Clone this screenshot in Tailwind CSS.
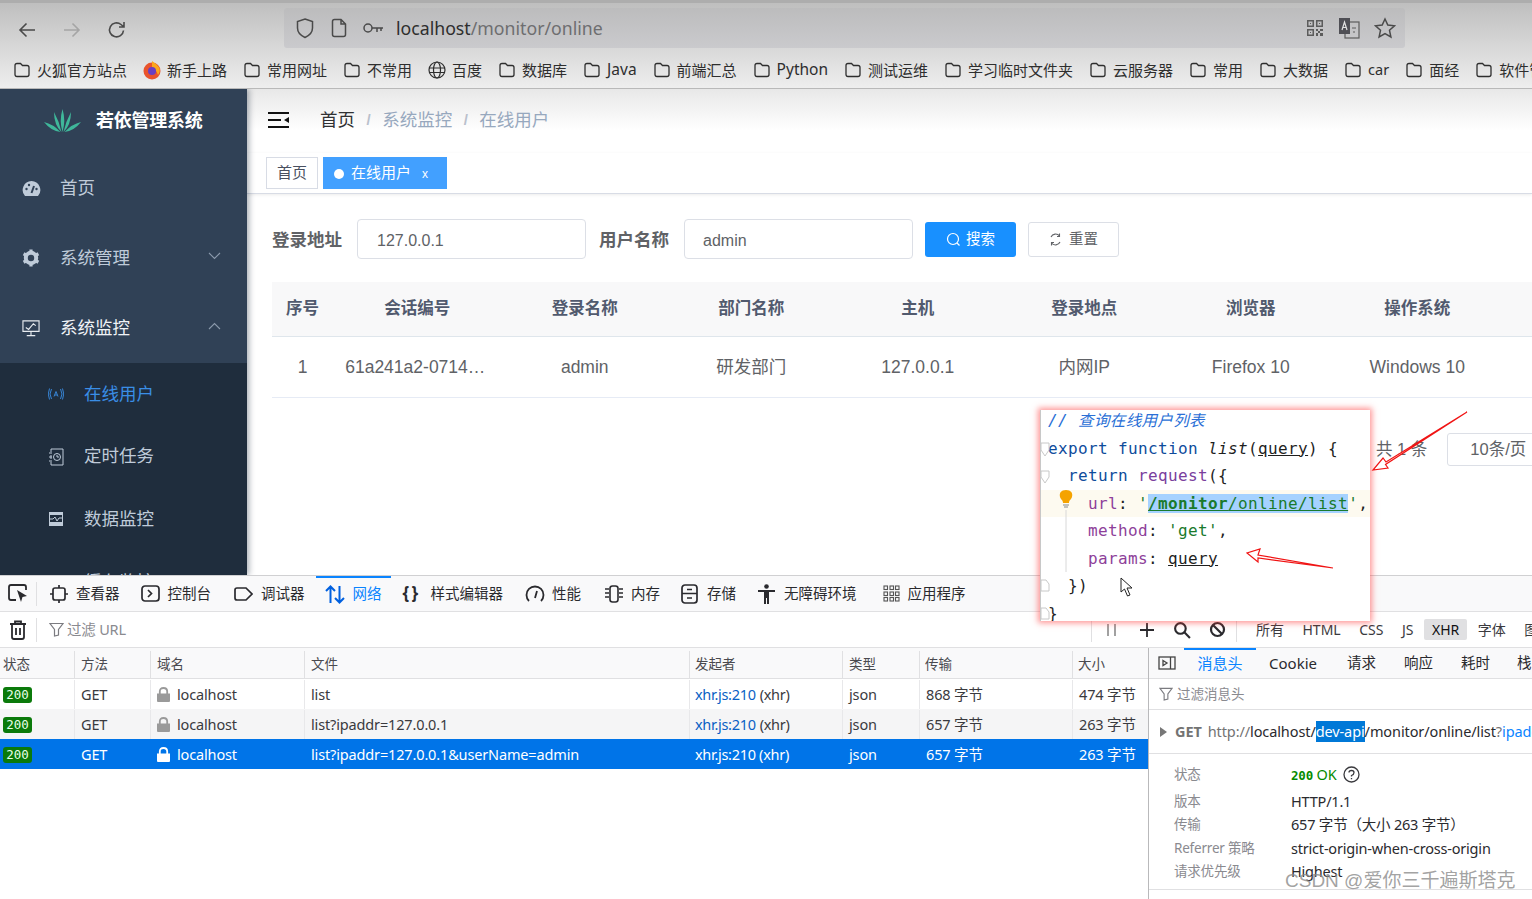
<!DOCTYPE html>
<html lang="en">
<head>
    <meta charset="UTF-8">
    <meta name="viewport" content="width=device-width, initial-scale=1.0">
    <script src="https://cdn.jsdelivr.net/npm/@tailwindcss/browser@4"></script>
    <title>在线用户</title>
</head>
<body class="bg-white overflow-hidden">
<svg class="hidden">
    <symbol id="folder" viewBox="0 0 18 18"><path d="M2 4.500Q2 2.500 4 2.500H7.500L9.500 4.500H14Q16 4.500 16 6.500V13.500Q16 15.500 14 15.500H4Q2 15.500 2 13.500Z" fill="none" stroke="currentColor" stroke-width="1.300"/></symbol>
    <symbol id="lock" viewBox="0 0 13 15"><path d="M0 6.500H13V14Q13 15 12 15H1Q0 15 0 14Z" fill="currentColor"/><path d="M2.800 7V4.500Q2.800 1 6.500 1T10.200 4.500V7" fill="none" stroke="currentColor" stroke-width="1.800"/></symbol>
</svg>

<div class="relative w-[1532px] h-[899px] overflow-hidden flex flex-col font-['Noto_Sans','Noto_Sans_CJK_SC',sans-serif]">

    <!-- Browser chrome -->
    <div class="h-[89px] shrink-0 border-b border-[#b9b9b9] bg-gradient-to-b from-[#bdbdbd] via-[#d6d6d6] to-[#eeeeee] text-[#2e2e2e]">
        <div class="h-[3px] bg-[#adadad]"></div>
        <div class="h-[45px] flex items-center mt-[4px]">
            <div class="w-[284px] flex items-center pl-[17px] gap-[25px] shrink-0">
                <svg class="w-5 h-5" viewBox="0 0 20 20" fill="none" stroke="#4a4a4a" stroke-width="1.600"><path d="M18 10H3M9.500 3.500L3 10L9.500 16.500"/></svg>
                <svg class="w-5 h-5" viewBox="0 0 20 20" fill="none" stroke="#a5a5a5" stroke-width="1.600"><path d="M2 10H17M10.500 3.500L17 10L10.500 16.500"/></svg>
                <svg class="w-5 h-5" viewBox="0 0 20 20" fill="none" stroke="#4a4a4a" stroke-width="1.600"><path d="M16.500 10.500A7 7 0 1 1 14 4.500L17 7M17 2V7H12"/></svg>
            </div>
            <div class="w-[1121px] h-[40px] -mt-[3px] bg-gradient-to-b from-[#bcbcbd] to-[#cacacd] rounded-[3px] flex items-center pl-[11px] gap-[12px]">
                <svg class="w-[20px] h-[22px]" viewBox="0 0 20 22" fill="none" stroke="#4a4a4a" stroke-width="1.500"><path d="M10 2L17.500 4.500V11Q17.500 17 10 20.500Q2.500 17 2.500 11V4.500Z"/></svg>
                <svg class="w-[16px] h-[20px] ml-[4px]" viewBox="0 0 16 20" fill="none" stroke="#4a4a4a" stroke-width="1.500"><path d="M3.500 1.500H10L14.500 6V16.500Q14.500 18.500 12.500 18.500H3.500Q1.500 18.500 1.500 16.500V3.500Q1.500 1.500 3.500 1.500ZM10 1.500V6H14.500"/></svg>
                <svg class="w-[22px] h-[14px] ml-[3px]" viewBox="0 0 22 14" fill="none" stroke="#4a4a4a" stroke-width="1.500"><circle cx="6" cy="7" r="4"/><path d="M10 7H21M15 7V11M19 7V10"/></svg>
                <span class="text-[17.700px]">localhost<span class="text-[#6e6e70]">/monitor/online</span></span>
                <div class="ml-auto flex items-center gap-[14px] pr-[9px]">
                    <svg class="w-[18px] h-[18px]" viewBox="0 0 18 18" fill="#5c5c5c"><path d="M1 1H8V8H1ZM2.500 2.500V6.500H6.500V2.500ZM10 1H17V8H10ZM11.500 2.500V6.500H15.500V2.500ZM1 10H8V17H1ZM2.500 11.500V15.500H6.500V11.500ZM4 4H5V5H4ZM13 4H14V5H13ZM4 13H5V14H4ZM10 10H12V12H10ZM12 12H14V14H12ZM14 10H17V12H14ZM10 14H12V17H10ZM14 14H17V17H14Z" fill-rule="evenodd"/></svg>
                    <svg class="w-[22px] h-[22px]" viewBox="0 0 22 22"><rect x="7" y="5" width="14" height="16" fill="none" stroke="#5c5c5c" stroke-width="1.200"/><path d="M1 1H12V17H1Z" fill="#4f4f55"/><path d="M4 13L6.500 5L9 13M5 10.500H8" stroke="#e0e0e0" stroke-width="1.200" fill="none"/><path d="M14 11H18M16 16V14" stroke="#5c5c5c" fill="none"/></svg>
                    <svg class="w-[22px] h-[22px]" viewBox="0 0 22 22" fill="none" stroke="#4a4a4a" stroke-width="1.500"><path d="M11 2L13.800 8L20.500 8.800L15.500 13.300L16.900 20L11 16.600L5.100 20L6.500 13.300L1.500 8.800L8.200 8Z"/></svg>
                </div>
            </div>
        </div>
        <div class="h-[36px] flex items-center pl-[13px] gap-[16px] text-[15px] whitespace-nowrap">
            <span class="flex items-center gap-[6px]"><svg class="w-[18px] h-[18px]"><use href="#folder"/></svg>火狐官方站点</span>
            <span class="flex items-center gap-[6px]"><svg class="w-[18px] h-[20px]" viewBox="0 0 18 20"><circle cx="9" cy="11" r="8.500" fill="#e9532c"/><path d="M9 1Q14 4 16.500 8Q17.500 12 15 15Q13 9 9 7Z" fill="#fba81c"/><circle cx="9" cy="11" r="4" fill="#6a3fc2"/></svg>新手上路</span>
            <span class="flex items-center gap-[6px]"><svg class="w-[18px] h-[18px]"><use href="#folder"/></svg>常用网址</span>
            <span class="flex items-center gap-[6px]"><svg class="w-[18px] h-[18px]"><use href="#folder"/></svg>不常用</span>
            <span class="flex items-center gap-[6px]"><svg class="w-[18px] h-[18px]" viewBox="0 0 18 18" fill="none" stroke="currentColor" stroke-width="1.200"><circle cx="9" cy="9" r="8"/><ellipse cx="9" cy="9" rx="3.500" ry="8"/><path d="M1 7H17M1 11.500H17"/></svg>百度</span>
            <span class="flex items-center gap-[6px]"><svg class="w-[18px] h-[18px]"><use href="#folder"/></svg>数据库</span>
            <span class="flex items-center gap-[6px]"><svg class="w-[18px] h-[18px]"><use href="#folder"/></svg><span class="text-[15.500px]">Java</span></span>
            <span class="flex items-center gap-[6px]"><svg class="w-[18px] h-[18px]"><use href="#folder"/></svg>前端汇总</span>
            <span class="flex items-center gap-[6px]"><svg class="w-[18px] h-[18px]"><use href="#folder"/></svg><span class="text-[15.500px]">Python</span></span>
            <span class="flex items-center gap-[6px]"><svg class="w-[18px] h-[18px]"><use href="#folder"/></svg>测试运维</span>
            <span class="flex items-center gap-[6px]"><svg class="w-[18px] h-[18px]"><use href="#folder"/></svg>学习临时文件夹</span>
            <span class="flex items-center gap-[6px]"><svg class="w-[18px] h-[18px]"><use href="#folder"/></svg>云服务器</span>
            <span class="flex items-center gap-[6px]"><svg class="w-[18px] h-[18px]"><use href="#folder"/></svg>常用</span>
            <span class="flex items-center gap-[6px]"><svg class="w-[18px] h-[18px]"><use href="#folder"/></svg>大数据</span>
            <span class="flex items-center gap-[6px]"><svg class="w-[18px] h-[18px]"><use href="#folder"/></svg><span class="text-[14.500px]">car</span></span>
            <span class="flex items-center gap-[6px]"><svg class="w-[18px] h-[18px]"><use href="#folder"/></svg>面经</span>
            <span class="flex items-center gap-[6px]"><svg class="w-[18px] h-[18px]"><use href="#folder"/></svg>软件管理</span>
        </div>
    </div>

    <!-- App -->
    <div class="h-[486px] shrink-0 flex overflow-hidden font-['Liberation_Sans','Noto_Sans_CJK_SC',sans-serif]">
        <!-- Sidebar -->
        <div class="w-[247px] shrink-0 bg-[#304156] text-[#bfcbd9] text-[17.500px] overflow-hidden relative z-10 shadow-[2px_0_6px_rgba(0,21,41,0.35)]">
            <div class="h-[64px] flex items-center pl-[44px] gap-[15px]">
                <svg class="w-[37px] h-[24px]" viewBox="0 0 37 24" fill="#3fb79a"><path d="M18.500 23Q15 12 18.500 0Q22 12 18.500 23ZM17.500 23Q10 16 10 3Q15 12 17.500 23ZM19.500 23Q27 16 27 3Q22 12 19.500 23ZM16.500 23Q7 22 0 13Q9 15 16.500 23ZM20.500 23Q30 22 37 13Q28 15 20.500 23Z"/></svg>
                <span class="text-white font-bold text-[18px] tracking-[-0.250px]">若依管理系统</span>
            </div>
            <div class="h-[70px] flex items-center pl-[22px] gap-[19px]">
                <svg class="w-[19px] h-[17px]" viewBox="0 0 19 17"><path d="M9.500 1A9 9 0 0 0 3 16H16A9 9 0 0 0 9.500 1Z" fill="#bfcbd9"/><path d="M9.500 13L12 6" stroke="#304156" stroke-width="2"/><circle cx="4.500" cy="9" r="1.200" fill="#304156"/><circle cx="7" cy="5" r="1.200" fill="#304156"/><circle cx="14.500" cy="9" r="1.200" fill="#304156"/></svg>
                <span>首页</span>
            </div>
            <div class="h-[70px] flex items-center pl-[22px] gap-[20px] relative">
                <svg class="w-[18px] h-[18px]" viewBox="0 0 18 18" fill="none"><circle cx="9" cy="9" r="5.200" stroke="#bfcbd9" stroke-width="4"/><path d="M9 0.500V4M9 14V17.500M1.600 4.750L4.700 6.500M13.300 11.500L16.400 13.250M1.600 13.250L4.700 11.500M13.300 6.500L16.400 4.750" stroke="#bfcbd9" stroke-width="3.200"/></svg>
                <span>系统管理</span>
                <svg class="w-[13px] h-[8px] absolute right-[26px] top-[29px]" viewBox="0 0 13 8" fill="none" stroke="#8b9aac" stroke-width="1.100"><path d="M1 1L6.500 6.500L12 1"/></svg>
            </div>
            <div class="h-[70px] flex items-center pl-[22px] gap-[20px] relative text-[#f0f3f6]">
                <svg class="w-[18px] h-[18px]" viewBox="0 0 19 19" fill="none" stroke="#e8ecf0" stroke-width="1.200"><path d="M1 2H18V13H1ZM9.500 13V17M5 17.500H14M4 9L7 11L12 5L14.500 7"/></svg>
                <span>系统监控</span>
                <svg class="w-[13px] h-[8px] absolute right-[26px] top-[29px]" viewBox="0 0 13 8" fill="none" stroke="#8b9aac" stroke-width="1.100"><path d="M1 7L6.500 1.500L12 7"/></svg>
            </div>
            <div class="bg-[#1f2d3d]">
                <div class="h-[62px] flex items-center pl-[48px] gap-[20px] text-[#3a8ee6]">
                    <svg class="w-[16px] h-[12px]" viewBox="0 0 16 12" fill="none" stroke="#3a8ee6" stroke-width="0.900"><path d="M3.500 1Q0.500 6 3.500 11M1.500 0.500Q-1 6 1.500 11.500M12.500 1Q15.500 6 12.500 11M14.500 0.500Q17 6 14.500 11.500"/><path d="M6 8.500L8 3.500L10 8.500M6.800 7H9.200"/></svg>
                    <span>在线用户</span>
                </div>
                <div class="h-[63px] flex items-center pl-[49px] gap-[20px]">
                    <svg class="w-[15px] h-[18px]" viewBox="0 0 15 18" fill="none" stroke="#bfcbd9" stroke-width="1"><path d="M2 1H14V17H2M2 1V4M2 7V11M2 14V17M0 5H3M0 9H3M0 13H3"/><circle cx="8" cy="9" r="3.500"/><path d="M8 7V9H10"/></svg>
                    <span>定时任务</span>
                </div>
                <div class="h-[62px] flex items-center pl-[49px] gap-[21px]">
                    <svg class="w-[14px] h-[14px]" viewBox="0 0 14 14"><rect width="14" height="14" fill="#bfcbd9"/><rect x="1" y="3" width="12" height="7" fill="#1f2d3d"/><path d="M1 7H4L6 5L8 9L10 6H13" fill="none" stroke="#bfcbd9"/></svg>
                    <span>数据监控</span>
                </div>
                <div class="h-[64px] flex items-center pl-[49px] gap-[21px]">
                    <svg class="w-[14px] h-[14px]" viewBox="0 0 14 14"><rect width="14" height="14" fill="#bfcbd9"/></svg>
                    <span>缓存监控</span>
                </div>
            </div>
        </div>

        <!-- Main -->
        <div class="flex-1 min-w-0 text-[#606266] overflow-hidden">
            <div class="h-[64px] bg-gradient-to-b from-[#e8e8e8] to-white to-[65%] flex items-center pl-[21px] pb-[2px] text-[17.500px]">
                <svg class="w-[21px] h-[16px] mr-[31px]" viewBox="0 0 21 16" fill="#111"><path d="M0 0H21V2H0ZM0 7H13V9H0ZM0 14H21V16H0ZM21 5V11L16 8Z"/></svg>
                <span class="text-[#303133]">首页</span>
                <span class="text-[#b9c0cc] mx-[11.500px] font-bold text-[15px]">/</span>
                <span class="text-[#97a8be]">系统监控</span>
                <span class="text-[#b9c0cc] mx-[11.500px] font-bold text-[15px]">/</span>
                <span class="text-[#97a8be]">在线用户</span>
            </div>
            <div class="h-[41px] border-b border-[#d8dce5] shadow-[0_1px_3px_rgba(0,0,0,0.08)] flex items-center pl-[19px] gap-[5px] text-[15px]">
                <span class="h-[32px] w-[52px] pt-[1px] border border-[#d8dce5] flex items-center justify-center text-[#495060]">首页</span>
                <span class="h-[32px] w-[124px] pt-[1px] bg-[#42a0ff] text-white flex items-center pl-[11px]">
                    <i class="w-[10px] h-[10px] rounded-full bg-white mr-[7px]"></i>在线用户<i class="not-italic text-[12px] ml-[11px]">x</i>
                </span>
            </div>
            <!-- Search form -->
            <div class="h-[40px] mt-[25px] flex items-center pl-[25px]">
                <span class="font-bold text-[17.500px] w-[85px] pt-[3px]">登录地址</span>
                <div class="w-[229px] h-[40px] border border-[#dcdfe6] rounded-[4px] flex items-center pl-[19px] pt-[3px] text-[16px]">127.0.0.1</div>
                <span class="font-bold text-[17.500px] w-[85px] ml-[13px] pt-[3px]">用户名称</span>
                <div class="w-[229px] h-[40px] border border-[#dcdfe6] rounded-[4px] flex items-center pl-[18px] pt-[3px] text-[16px]">admin</div>
                <div class="w-[91px] h-[35px] ml-[12px] bg-[#1890ff] rounded-[3px] text-white flex items-center justify-center gap-[5px] pt-[1px] text-[14.500px]">
                    <svg class="w-[15px] h-[15px]" viewBox="0 0 15 15" fill="none" stroke="#fff" stroke-width="1.200"><circle cx="7" cy="7" r="5.500"/><path d="M11 11L13.500 13.500"/></svg>搜索
                </div>
                <div class="w-[91px] h-[35px] ml-[12px] border border-[#dcdfe6] rounded-[3px] flex items-center justify-center gap-[7px] pt-[1px] text-[14.500px]">
                    <svg class="w-[13px] h-[13px]" viewBox="0 0 13 13" fill="none" stroke="#606266" stroke-width="1.100"><path d="M2 4A5 5 0 0 1 10.500 3M11 9A5 5 0 0 1 2.500 10M10.500 0.500V3.500H8M2.500 12.500V9.500H5"/></svg>重置
                </div>
            </div>
            <!-- Table -->
            <div class="mt-[23px] ml-[25px] w-[1260px]">
                <div class="h-[55px] pb-[1px] grid grid-cols-[61px_168.500px_repeat(7,166.500px)] items-center text-center bg-[#f8f8f9] border-b border-[#dfe6ec] font-bold text-[#515a6e] text-[16.500px] whitespace-nowrap">
                    <span>序号</span><span>会话编号</span><span>登录名称</span><span>部门名称</span><span>主机</span><span>登录地点</span><span>浏览器</span><span>操作系统</span><span></span>
                </div>
                <div class="h-[61px] grid grid-cols-[61px_168.500px_repeat(7,166.500px)] items-center text-center border-b border-[#e6ebf5] text-[17.500px] whitespace-nowrap">
                    <span>1</span><span class="pr-[4px]">61a241a2-0714…</span><span>admin</span><span>研发部门</span><span>127.0.0.1</span><span>内网IP</span><span>Firefox 10</span><span>Windows 10</span><span></span>
                </div>
            </div>
            <!-- Pagination -->
            <div class="mt-[35px] pl-[1129px] flex items-center gap-[20px] text-[16.500px] whitespace-nowrap">
                <span>共 1 条</span>
                <div class="w-[94px] h-[33px] shrink-0 border border-[#dcdfe6] rounded-[3px] pl-[22px] flex items-center">10条/页</div>
            </div>
        </div>
    </div>

    <!-- Devtools -->
    <div class="flex-1 flex flex-col border-t border-[#d0d0d2] text-[14.500px] text-[#2a2a2e] whitespace-nowrap relative z-10 bg-white">
        <div class="h-[36px] shrink-0 bg-[#f9f9fa] border-b border-[#e0e0e2] flex items-center">
            <div class="w-[37px] h-[24px] flex items-center justify-center border-r border-[#e0e0e2]">
                <svg class="w-[20px] h-[19px]" viewBox="0 0 20 19" fill="none" stroke="#2a2a2e" stroke-width="1.800"><path d="M8 16H3Q1 16 1 14V3Q1 1 3 1H16Q18 1 18 3V6"/><path d="M9 6L19 12L14.500 13L13 18Z" fill="#2a2a2e" stroke="none"/></svg>
            </div>
            <div class="flex items-center h-full pl-[13px]">
                <span class="flex items-center gap-[8px] pr-[21px]"><svg class="w-[18px] h-[18px]" viewBox="0 0 18 18" fill="none" stroke="#2a2a2e" stroke-width="1.700"><rect x="3" y="3" width="12" height="12" rx="2"/><path d="M9 0V3M9 15V18M0 9H3M15 9H18"/></svg>查看器</span>
                <span class="flex items-center gap-[8px] pr-[23px]"><svg class="w-[19px] h-[17px]" viewBox="0 0 19 17" fill="none" stroke="#2a2a2e" stroke-width="1.700"><rect x="1" y="1" width="17" height="15" rx="3"/><path d="M7 5L10.500 8.500L7 12"/></svg>控制台</span>
                <span class="flex items-center gap-[8px] pr-[11px]"><svg class="w-[19px] h-[14px]" viewBox="0 0 19 14" fill="none" stroke="#2a2a2e" stroke-width="1.700"><path d="M3 1H12L18 7L12 13H3Q1 13 1 11V3Q1 1 3 1Z"/></svg>调试器</span>
                <span class="h-full flex items-center gap-[8px] px-[9px] text-[#0a84ff] border-t-2 border-[#0a84ff] -mt-[1px]"><svg class="w-[20px] h-[19px]" viewBox="0 0 20 19" fill="none" stroke="#0060df" stroke-width="2"><path d="M5.500 18V2M1 6L5.500 1.500L10 6M14.500 1V17M10 13L14.500 17.500L19 13"/></svg>网络</span>
                <span class="flex items-center gap-[8px] pl-[12px] pr-[14px]"><span class="font-bold text-[17px] leading-none -mt-[3px] w-[20px] tracking-[-1px]">{ }</span>样式编辑器</span>
                <span class="flex items-center gap-[7px] pr-[15px] pl-[8px]"><svg class="w-[20px] h-[18px]" viewBox="0 0 20 18" fill="none" stroke="#2a2a2e" stroke-width="1.800"><path d="M4 16A8.500 8.500 0 1 1 16 16M10 13L12 6"/></svg>性能</span>
                <span class="flex items-center gap-[7px] pr-[13px] pl-[8px]"><svg class="w-[20px] h-[18px]" viewBox="0 0 20 18" fill="none" stroke="#2a2a2e" stroke-width="1.600"><rect x="6" y="1" width="8" height="16" rx="2.500"/><path d="M1 4H5M1 8H5M1 12H5M15 4H19M15 8H19M15 12H19"/></svg>内存</span>
                <span class="flex items-center gap-[9px] pr-[14px] pl-[8px]"><svg class="w-[17px] h-[20px]" viewBox="0 0 17 20" fill="none" stroke="#2a2a2e" stroke-width="1.700"><rect x="1" y="1" width="15" height="18" rx="3"/><path d="M1 9.500H16M6 5.500H11M6 14H11"/></svg>存储</span>
                <span class="flex items-center gap-[9px] pr-[25px] pl-[8px]"><svg class="w-[17px] h-[20px]" viewBox="0 0 17 20" fill="#2a2a2e"><circle cx="8.500" cy="2.500" r="2.300"/><path d="M0 6H17V8H11V20H9V14H8V20H6V8H0Z"/></svg>无障碍环境</span>
                <span class="flex items-center gap-[8px] pl-[1px]"><svg class="w-[17px] h-[17px]" viewBox="0 0 17 17" fill="none" stroke="#555" stroke-width="1.100"><rect x="1" y="1" width="3.500" height="3.500"/><rect x="7" y="1" width="3.500" height="3.500"/><rect x="12.500" y="1" width="3.500" height="3.500"/><rect x="1" y="7" width="3.500" height="3.500"/><rect x="7" y="7" width="3.500" height="3.500"/><rect x="12.500" y="7" width="3.500" height="3.500"/><rect x="1" y="12.500" width="3.500" height="3.500"/><rect x="7" y="12.500" width="3.500" height="3.500"/><rect x="12.500" y="12.500" width="3.500" height="3.500"/></svg>应用程序</span>
            </div>
        </div>
        <div class="h-[36px] shrink-0 bg-white border-b border-[#e0e0e2] flex items-center">
            <div class="w-[37px] h-[24px] flex items-center justify-center border-r border-[#e0e0e2]">
                <svg class="w-[16px] h-[20px]" viewBox="0 0 16 20" fill="none" stroke="#2a2a2e" stroke-width="1.800"><path d="M0 4H16M5 4V1.500H11V4M2 4V17Q2 19 4 19H12Q14 19 14 17V4M6 8V15M10 8V15"/></svg>
            </div>
            <svg class="w-[15px] h-[15px] ml-[12px]" viewBox="0 0 15 15" fill="none" stroke="#7b7b80" stroke-width="1.200"><path d="M1 1.500H14L9.500 7.500V13L5.500 14V7.500Z"/></svg>
            <span class="ml-[3px] text-[#8a8a8f] tracking-[-0.200px]">过滤 URL</span>
            <div class="absolute left-[1091px] flex items-center h-[24px] pl-[13px] border-l border-[#e0e0e2] w-[441px]">
                <svg class="w-[14px] h-[14px] shrink-0 mr-[20px]" viewBox="0 0 14 14" stroke="#555" stroke-width="1.100"><path d="M3 1V13M10 1V13"/></svg>
                <svg class="w-[16px] h-[16px] shrink-0 mr-[18px]" viewBox="0 0 16 16" stroke="#2a2a2e" stroke-width="1.800"><path d="M8 1V15M1 8H15"/></svg>
                <svg class="w-[18px] h-[18px] shrink-0 mr-[18px]" viewBox="0 0 17 17" fill="none" stroke="#2a2a2e" stroke-width="2"><circle cx="7" cy="7" r="5"/><path d="M10.500 10.500L16 16"/></svg>
                <svg class="w-[17px] h-[17px] shrink-0 mr-[10px]" viewBox="0 0 17 17" fill="none" stroke="#2a2a2e" stroke-width="2.200"><circle cx="8.500" cy="8.500" r="6.500"/><path d="M4 4L13 13"/></svg>
                <div class="flex items-center border-l border-[#e0e0e2] h-[24px] pl-[19px] text-[14px] text-[#3a3a3e] gap-[18.500px]">
                    <span>所有</span><span>HTML</span><span>CSS</span><span>JS</span><span class="px-[8px] -mx-[8px] bg-[#e0e0e2] rounded-[2px] text-[#111]">XHR</span><span>字体</span><span>图</span>
                </div>
            </div>
        </div>
        <div class="flex-1 flex min-h-0">
            <!-- Requests -->
            <div class="w-[1149px] shrink-0 border-r border-[#b9b9bb]">
                <div class="h-[31px] pt-[3px] grid grid-cols-[75px_76px_154px_385px_153px_77px_153px_75px] items-center bg-[#f9f9fa] border-b border-[#e0e0e2] text-[13.500px] text-[#4a4a4f]">
                    <span class="h-full flex items-center pl-[3px] border-r border-[#e0e0e2]">状态</span>
                    <span class="h-full flex items-center pl-[6px] border-r border-[#e0e0e2]">方法</span>
                    <span class="h-full flex items-center pl-[6px] border-r border-[#e0e0e2]">域名</span>
                    <span class="h-full flex items-center pl-[6px] border-r border-[#e0e0e2]">文件</span>
                    <span class="h-full flex items-center pl-[5px] border-r border-[#e0e0e2]">发起者</span>
                    <span class="h-full flex items-center pl-[6px] border-r border-[#e0e0e2]">类型</span>
                    <span class="h-full flex items-center pl-[5px] border-r border-[#e0e0e2]">传输</span>
                    <span class="h-full flex items-center pl-[5px]">大小</span>
                </div>
                <div class="h-[30px] pt-[1px] grid grid-cols-[75px_76px_154px_385px_153px_77px_153px_75px] items-center tracking-[-0.150px] text-[#3a3a3e]">
                    <span class="h-full flex items-center pl-[3px] border-r border-[#e8e8ea]"><b class="w-[29px] h-[16px] mt-[1px] rounded-[3px] bg-[#0b7a0b] text-[#e8ffe8] flex items-center justify-center font-['DejaVu_Sans_Mono',monospace] font-normal text-[12.500px] tracking-normal">200</b></span>
                    <span class="h-full flex items-center pl-[6px] border-r border-[#e8e8ea]">GET</span>
                    <span class="h-full flex items-center pl-[6px] gap-[7px] border-r border-[#e8e8ea]"><svg class="w-[13px] h-[15px] text-[#9a9a9a]"><use href="#lock"/></svg>localhost</span>
                    <span class="h-full flex items-center pl-[6px] border-r border-[#e8e8ea]">list</span>
                    <span class="h-full flex items-center pl-[5px] border-r border-[#e8e8ea] gap-[4px] tracking-[-0.300px]"><span class="text-[#0a5fc4]">xhr.js:210</span>(xhr)</span>
                    <span class="h-full flex items-center pl-[6px] border-r border-[#e8e8ea]">json</span>
                    <span class="h-full flex items-center pl-[6px] border-r border-[#e8e8ea]">868 字节</span>
                    <span class="h-full flex items-center pl-[6px]">474 字节</span>
                </div>
                <div class="h-[30px] pt-[1px] grid grid-cols-[75px_76px_154px_385px_153px_77px_153px_75px] items-center tracking-[-0.150px] text-[#3a3a3e] bg-[#f5f5f6]">
                    <span class="h-full flex items-center pl-[3px] border-r border-[#e8e8ea]"><b class="w-[29px] h-[16px] mt-[1px] rounded-[3px] bg-[#0b7a0b] text-[#e8ffe8] flex items-center justify-center font-['DejaVu_Sans_Mono',monospace] font-normal text-[12.500px] tracking-normal">200</b></span>
                    <span class="h-full flex items-center pl-[6px] border-r border-[#e8e8ea]">GET</span>
                    <span class="h-full flex items-center pl-[6px] gap-[7px] border-r border-[#e8e8ea]"><svg class="w-[13px] h-[15px] text-[#9a9a9a]"><use href="#lock"/></svg>localhost</span>
                    <span class="h-full flex items-center pl-[6px] border-r border-[#e8e8ea]">list?ipaddr=127.0.0.1</span>
                    <span class="h-full flex items-center pl-[5px] border-r border-[#e8e8ea] gap-[4px] tracking-[-0.300px]"><span class="text-[#0a5fc4]">xhr.js:210</span>(xhr)</span>
                    <span class="h-full flex items-center pl-[6px] border-r border-[#e8e8ea]">json</span>
                    <span class="h-full flex items-center pl-[6px] border-r border-[#e8e8ea]">657 字节</span>
                    <span class="h-full flex items-center pl-[6px]">263 字节</span>
                </div>
                <div class="h-[30px] pt-[1px] grid grid-cols-[75px_76px_154px_385px_153px_77px_153px_75px] items-center tracking-[-0.150px] bg-[#0074e8] text-white">
                    <span class="h-full flex items-center pl-[3px]"><b class="w-[29px] h-[16px] mt-[1px] rounded-[3px] bg-[#0b7a0b] text-[#e8ffe8] flex items-center justify-center font-['DejaVu_Sans_Mono',monospace] font-normal text-[12.500px] tracking-normal">200</b></span>
                    <span class="h-full flex items-center pl-[6px]">GET</span>
                    <span class="h-full flex items-center pl-[6px] gap-[7px]"><svg class="w-[13px] h-[15px] text-white"><use href="#lock"/></svg>localhost</span>
                    <span class="h-full flex items-center pl-[6px]">list?ipaddr=127.0.0.1&amp;userName=admin</span>
                    <span class="h-full flex items-center pl-[5px] tracking-[-0.300px]">xhr.js:210 (xhr)</span>
                    <span class="h-full flex items-center pl-[6px]">json</span>
                    <span class="h-full flex items-center pl-[6px]">657 字节</span>
                    <span class="h-full flex items-center pl-[6px]">263 字节</span>
                </div>
            </div>
            <!-- Details -->
            <div class="flex-1 min-w-0 overflow-hidden">
                <div class="h-[31px] bg-[#f9f9fa] border-b border-[#e0e0e2] flex items-center">
                    <svg class="w-[18px] h-[14px] ml-[9px]" viewBox="0 0 18 14" fill="none" stroke="#444" stroke-width="1.300"><rect x="1" y="1" width="16" height="12"/><path d="M12.500 1V13M5 4.500L9 7L5 9.500Z"/></svg>
                    <span class="h-full w-[72px] ml-[8px] flex items-center justify-center text-[#0a84ff] border-t-2 border-[#0a84ff] -mt-[1px] text-[15px]">消息头</span>
                    <span class="ml-[13px] text-[15px]">Cookie</span>
                    <span class="ml-[30px] text-[14.500px]">请求</span>
                    <span class="ml-[28px] text-[14.500px]">响应</span>
                    <span class="ml-[28px] text-[14.500px]">耗时</span>
                    <span class="ml-[27px] text-[14.500px]">栈</span>
                </div>
                <div class="h-[31px] border-b border-[#e0e0e2] flex items-center pl-[10px] gap-[4px] text-[13.500px] text-[#8a8a8f]">
                    <svg class="w-[14px] h-[14px]" viewBox="0 0 15 15" fill="none" stroke="#7b7b80" stroke-width="1.200"><path d="M1 1.500H14L9.500 7.500V13L5.500 14V7.500Z"/></svg>过滤消息头
                </div>
                <div class="h-[44px] border-b border-[#e0e0e2] flex items-center pl-[11px] text-[14.500px] tracking-[-0.100px]">
                    <svg class="w-[7px] h-[10px] mr-[8px] shrink-0" viewBox="0 0 7 10" fill="#777"><path d="M0 0L7 5L0 10Z"/></svg>
                    <b class="text-[#737373] mr-[6px]">GET</b>
                    <span class="text-[#737373]">http://</span><span>localhost/</span><span class="bg-[#0078d7] text-white">dev-api</span><span>/monitor/online/list</span><span class="text-[#737373]">?</span><span class="text-[#0a84ff]">ipaddr</span>
                </div>
                <div class="pl-[25px] pt-[9px] text-[14.500px] tracking-[-0.200px]">
                    <div class="h-[23px] mb-[4px] flex items-center"><span class="w-[117px] text-[#8a8a8f] text-[13.500px]">状态</span><span class="text-[#058b00]"><span class="font-['DejaVu_Sans_Mono',monospace] text-[12.500px] font-bold">200</span> OK</span><svg class="w-[17px] h-[17px] ml-[7px]" viewBox="0 0 17 17" fill="none" stroke="#3a3a3e" stroke-width="1.300"><circle cx="8.500" cy="8.500" r="7.500"/><path d="M6 6.500Q6 4.500 8.500 4.500T11 6.500T8.500 9.500V10.500M8.500 12V13.300"/></svg></div>
                    <div class="h-[23px] flex items-center"><span class="w-[117px] text-[#8a8a8f] text-[13.500px]">版本</span>HTTP/1.1</div>
                    <div class="h-[23px] flex items-center"><span class="w-[117px] text-[#8a8a8f] text-[13.500px]">传输</span>657 字节（大小 263 字节）</div>
                    <div class="h-[23px] mt-[1px] flex items-center"><span class="w-[117px] text-[#8a8a8f] text-[13.500px]">Referrer 策略</span>strict-origin-when-cross-origin</div>
                    <div class="h-[23px] flex items-center"><span class="w-[117px] text-[#8a8a8f] text-[13.500px]">请求优先级</span>Highest</div>
                </div>
                <div class="border-t border-[#e0e0e2] mt-[6px] pl-[28px] pt-[6px] text-[13.500px]">响应头 (204 字节)</div>
            </div>
        </div>
    </div>

    <!-- Pasted code snippet -->
    <div class="absolute z-20 left-[1040px] top-[410px] w-[330px] h-[211px] bg-white overflow-hidden shadow-[0_0_6px_2px_rgba(255,60,60,0.55)] font-['DejaVu_Sans_Mono',monospace] text-[16px] leading-[27.500px] tracking-[0.370px] text-[#1f1f1f] whitespace-nowrap pl-[8px]">
        <div class="text-[#2a6fd6] italic -mt-[4px]">// <span class="font-['Noto_Sans_CJK_SC'] text-[15.500px]">查询在线用户列表</span></div>
        <div><span class="text-[#0f4c9c]">export function</span> <i>list</i>(<u>query</u>) {</div>
        <div class="pl-[20px]"><span class="text-[#0f4c9c]">return</span> <span class="text-[#7a3e9d]">request</span>({</div>
        <div class="-ml-[8px] pl-[48px] bg-[#fdfaf0]"><span class="text-[#8e3f9a]">url</span>: <span class="text-[#1a7a2c]">'<span class="bg-[#a6d2ff] underline"><b>/monitor</b>/online/list</span>'</span>,</div>
        <div class="pl-[40px]"><span class="text-[#8e3f9a]">method</span>: <span class="text-[#1a7a2c]">'get'</span>,</div>
        <div class="pl-[40px]"><span class="text-[#8e3f9a]">params</span>: <u>query</u></div>
        <div class="pl-[20px]">})</div>
        <div>}</div>
        <svg class="absolute left-[18px] top-[80px] w-[16px] h-[120px]" viewBox="0 0 16 120"><path d="M8 0C3 0 1 3 2 7C3 10 5 10 5 13H11C11 10 13 10 14 7C15 3 13 0 8 0Z" fill="#f5a300"/><path d="M5 15H11M6 17H10" stroke="#888" stroke-width="1.200"/><path d="M8 20V82" stroke="#d8d8d8"/></svg>
        <svg class="absolute left-0 top-0 w-[12px] h-[211px]" viewBox="0 0 12 211" fill="white" stroke="#c8c8c8"><path d="M0.500 0V211"/><path d="M1 33H9V40L5 46L1 40ZM1 61H9V67L5 73L1 67ZM1 170L6 170L9 174V181H1ZM1 198L6 198L9 202V209H1Z"/></svg>
    </div>

    <!-- Annotation arrows, cursor, watermark -->
    <svg class="absolute z-30 left-0 top-0 w-[1532px] h-[899px] pointer-events-none" viewBox="0 0 1532 899">
        <path d="M1467 412L1386 462L1383 458L1373 470L1388 468L1385.500 464.500Z" fill="white" stroke="#f01414" stroke-width="1.200"/>
        <path d="M1333 568L1258 555L1260 549L1247 553L1258 562L1258 558Z" fill="white" stroke="#f01414" stroke-width="1.200"/>
        <path d="M1121 578V592L1124.500 589L1127.500 596L1130 595L1127 588H1132Z" fill="white" stroke="#222" stroke-width="1"/>
    </svg>
    <div class="absolute z-30 left-[1285px] top-[867px] text-[19px] text-[#8a8a8a]/80 font-['Liberation_Sans','Noto_Sans_CJK_SC',sans-serif] whitespace-nowrap">CSDN @爱你三千遍斯塔克</div>
</div>
</body>
</html>
